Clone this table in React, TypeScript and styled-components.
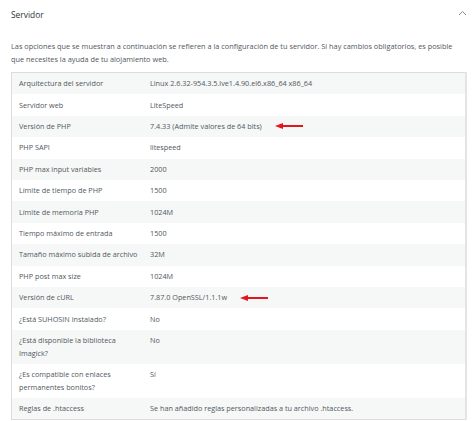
import React from "react";
import styled, { createGlobalStyle } from "styled-components";

const Global = createGlobalStyle`
  html, body { margin: 0; padding: 0; background: #fff; }
  body { font-family: "Open Sans", "Noto Sans", sans-serif; color: #50575e; }
`;

const Page = styled.div`
  padding: 0 7px 0 11px;
`;

const Header = styled.div`
  display: flex;
  justify-content: space-between;
  align-items: center;
  height: 28px;
`;

const Title = styled.h2`
  margin: 0;
  font-size: 8.4px;
  font-weight: 400;
  color: #2c3338;
`;

const Chevron = styled.svg`
  width: 9px;
  height: 6px;
  margin-right: 0;
  margin-top: -3px;
`;

const Desc = styled.p`
  margin: 12px 0 6px;
  font-size: 7.35px;
  line-height: 13px;
  color: #50575e;
`;

const Table = styled.table`
  width: 456px;
  border-collapse: collapse;
  table-layout: fixed;
  border: 1px solid #dcdcde;
  border-right: 2px solid #e4e4e6;
  font-size: 7.25px;
  line-height: 12.8px;
`;

const Row = styled.tr<{ $alt: boolean }>`
  background: ${(p) => (p.$alt ? "#f6f7f7" : "#fff")};
`;

const Label = styled.td`
  width: 119px;
  padding: 4.3px 6px 4.3px 7px;
  vertical-align: top;
`;

const Value = styled.td`
  padding: 4.3px 7px 4.3px 6px;
  vertical-align: top;
`;

const ValueInner = styled.span`
  display: inline-flex;
  align-items: center;
  gap: 13px;
`;

const Arrow = () => (
  <svg width="28" height="6" viewBox="0 0 28 6">
    <polygon points="0,3 8,0 8,6" fill="#e3161c" />
    <rect x="7" y="2" width="21" height="2" fill="#e3161c" />
  </svg>
);

const rows: { label: string; value: string; arrow?: boolean }[] = [
  { label: "Arquitectura del servidor", value: "Linux 2.6.32-954.3.5.lve1.4.90.el6.x86_64 x86_64" },
  { label: "Servidor web", value: "LiteSpeed" },
  { label: "Versión de PHP", value: "7.4.33 (Admite valores de 64 bits)", arrow: true },
  { label: "PHP SAPI", value: "litespeed" },
  { label: "PHP max input variables", value: "2000" },
  { label: "Límite de tiempo de PHP", value: "1500" },
  { label: "Límite de memoria PHP", value: "1024M" },
  { label: "Tiempo máximo de entrada", value: "1500" },
  { label: "Tamaño máximo subida de archivo", value: "32M" },
  { label: "PHP post max size", value: "1024M" },
  { label: "Versión de cURL", value: "7.87.0 OpenSSL/1.1.1w", arrow: true },
  { label: "¿Está SUHOSIN instalado?", value: "No" },
  { label: "¿Está disponible la biblioteca Imagick?", value: "No" },
  { label: "¿Es compatible con enlaces permanentes bonitos?", value: "Sí" },
  { label: "Reglas de .htaccess", value: "Se han añadido reglas personalizadas a tu archivo .htaccess." },
];

export default function App() {
  return (
    <Page>
      <Global />
      <Header>
        <Title>Servidor</Title>
        <Chevron viewBox="0 0 9 6">
          <polyline points="1,5 4.5,1.5 8,5" fill="none" stroke="#8c8f94" strokeWidth="1" />
        </Chevron>
      </Header>
      <Desc>
        Las opciones que se muestran a continuación se refieren a la configuración de tu servidor. Si hay
        cambios obligatorios, es posible que necesites la ayuda de tu alojamiento web.
      </Desc>
      <Table>
        <tbody>
          {rows.map((r, i) => (
            <Row key={r.label} $alt={i % 2 === 0}>
              <Label>{r.label}</Label>
              <Value>
                {r.arrow ? (
                  <ValueInner>
                    {r.value}
                    <Arrow />
                  </ValueInner>
                ) : (
                  r.value
                )}
              </Value>
            </Row>
          ))}
        </tbody>
      </Table>
    </Page>
  );
}
